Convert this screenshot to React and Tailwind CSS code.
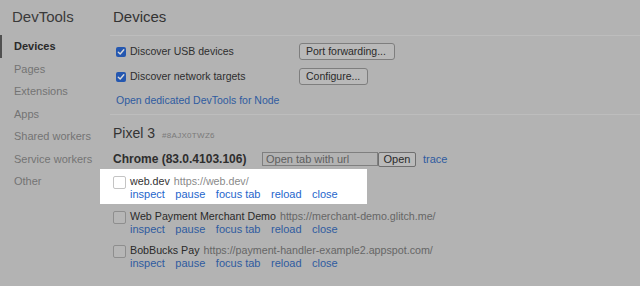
import React from "react";

const font = { fontFamily: '"Liberation Sans", Arial, sans-serif' };

function CheckedBox() {
  return (
    <span className="w-[10px] h-[10px] rounded-[2px] bg-[#2457b0] flex items-center justify-center shrink-0">
      <svg width="8" height="8" viewBox="0 0 8 8">
        <path d="M1.3 4.2 L3.2 6 L6.8 1.8" stroke="#d8d8d8" strokeWidth="1.4" fill="none" strokeLinecap="round" strokeLinejoin="round" />
      </svg>
    </span>
  );
}

function DeviceRow({ name, url, highlight, first }) {
  const linkColor = highlight ? "text-[#1f66cc]" : "text-[#2f5ba0]";
  return (
    <div
      className={`flex pl-[13px] ${first ? "h-[35px]" : "h-[34px]"} ${highlight ? "bg-white w-[267px]" : ""}`}
    >
      <span
        className={`mt-[7px] w-[13px] h-[13px] rounded-[2px] border shrink-0 ${
          highlight ? "border-[#c4c4c4] bg-white" : "border-[#8e8e8e] bg-[#b6b6b6]"
        }`}
      />
      <div className="ml-[4px] pt-[6px] flex flex-col">
        <div className="h-[13px] leading-[13px] text-[10.7px] whitespace-nowrap">
          <span className={highlight ? "text-[#333333]" : "text-[#2a2a2a]"}>{name}</span>
          <span className={`ml-[4px] ${highlight ? "text-[#8a8a8a]" : "text-[#666666]"}`}>{url}</span>
        </div>
        <div className={`h-[13px] leading-[13px] text-[11px] flex gap-[10.5px] whitespace-nowrap ${linkColor}`}>
          <span>inspect</span>
          <span>pause</span>
          <span>focus tab</span>
          <span>reload</span>
          <span>close</span>
        </div>
      </div>
    </div>
  );
}

export default function App() {
  const items = ["Devices", "Pages", "Extensions", "Apps", "Shared workers", "Service workers", "Other"];
  return (
    <div className="w-[640px] h-[286px] bg-[#b3b3b3] flex overflow-hidden" style={font}>
      <div className="w-[100px] shrink-0 flex flex-col">
        <div className="h-[35px] flex items-center pl-[12px] text-[15px] text-[#3a3a3a]">DevTools</div>
        <div className="flex flex-col">
          {items.map((it, i) => (
            <div
              key={it}
              className={`h-[22.5px] flex items-center text-[11px] border-l-2 ${
                i === 0 ? "border-[#505050] text-[#2a2a2a] font-bold pl-[12px]" : "border-transparent text-[#737373] pl-[12px]"
              }`}
            >
              {it}
            </div>
          ))}
        </div>
      </div>
      <div className="flex-1 flex flex-col">
        <div className="ml-[10px] pl-[3px] h-[36px] border-b border-[#bdbdbd] flex items-center text-[15px] text-[#333333]">
          Devices
        </div>
        <div className="ml-[10px] pl-[6px] pt-[7px] pb-[7px] border-b border-[#bdbdbd] flex flex-col">
          <div className="h-[17px] flex items-center">
            <CheckedBox />
            <span className="ml-[4px] w-[169px] text-[10.5px] text-[#2e2e2e] whitespace-nowrap">Discover USB devices</span>
            <span className="h-[17px] w-[96px] pl-[6px] flex items-center text-[10.5px] text-[#2a2a2a] bg-[#b9b9b9] border border-[#7e7e7e] rounded-[3px] whitespace-nowrap">
              Port forwarding...
            </span>
          </div>
          <div className="h-[17px] mt-[8px] flex items-center">
            <CheckedBox />
            <span className="ml-[4px] w-[169px] text-[10.5px] text-[#2e2e2e] whitespace-nowrap">Discover network targets</span>
            <span className="h-[17px] w-[69px] pl-[6px] flex items-center text-[10.5px] text-[#2a2a2a] bg-[#b9b9b9] border border-[#7e7e7e] rounded-[3px] whitespace-nowrap">
              Configure...
            </span>
          </div>
          <div className="h-[14px] mt-[8px] leading-[14px] text-[10.5px] text-[#2f5ba0] whitespace-nowrap">
            Open dedicated DevTools for Node
          </div>
        </div>
        <div className="pl-[13px] pt-[9px] h-[27px] flex items-baseline whitespace-nowrap">
          <span className="text-[14px] leading-[18px] text-[#333333]">Pixel 3</span>
          <span className="ml-[7px] text-[8px] text-[#7a7a7a] tracking-[0.3px]">#8AJX0TWZ6</span>
        </div>
        <div className="pl-[13px] mt-[10px] h-[14px] flex items-center whitespace-nowrap">
          <span className="w-[149px] text-[12px] font-bold text-[#2e2e2e]">Chrome (83.0.4103.106)</span>
          <span className="w-[116px] h-[14px] border border-[#7f7f7f] pl-[3px] flex items-center text-[11px] text-[#5e5e5e]">
            Open tab with url
          </span>
          <span className="w-[38px] h-[15px] border border-[#6f6f6f] bg-[#bababa] rounded-[2px] flex items-center justify-center text-[11px] text-[#2a2a2a]">
            Open
          </span>
          <span className="ml-[7px] text-[11px] text-[#2f5ba0]">trace</span>
        </div>
        <div className="mt-[3px] flex flex-col">
          <DeviceRow name="web.dev" url="https://web.dev/" highlight first />
          <DeviceRow name="Web Payment Merchant Demo" url="https://merchant-demo.glitch.me/" />
          <DeviceRow name="BobBucks Pay" url="https://payment-handler-example2.appspot.com/" />
        </div>
      </div>
    </div>
  );
}
